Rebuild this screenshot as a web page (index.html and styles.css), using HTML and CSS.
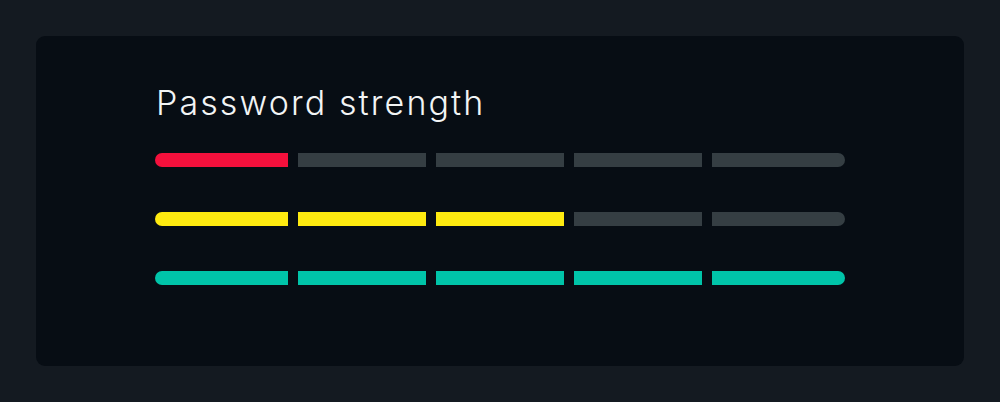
FILE: index.html
```html
<!DOCTYPE html>
<html lang="en">
<head>
    <meta charset="UTF-8">
    <meta name="viewport" content="width=device-width, initial-scale=1.0">
    <title>Password strength</title>
    <link rel="stylesheet" href="styles.css">
</head>
<body>
    <div class="panel">
        <h1 class="panel-title">Password strength</h1>

        <div class="meter weak">
            <span class="seg on"></span>
            <span class="seg"></span>
            <span class="seg"></span>
            <span class="seg"></span>
            <span class="seg"></span>
        </div>
        <div class="meter medium">
            <span class="seg on"></span>
            <span class="seg on"></span>
            <span class="seg on"></span>
            <span class="seg"></span>
            <span class="seg"></span>
        </div>
        <div class="meter strong">
            <span class="seg on"></span>
            <span class="seg on"></span>
            <span class="seg on"></span>
            <span class="seg on"></span>
            <span class="seg on"></span>
        </div>
    </div>
</body>
</html>
```

FILE: styles.css
```css
html, body {
    height: 100%;
}
body {
    margin: 0;
    padding: 36px;
    box-sizing: border-box;
    background: #141a21;
    font-family: Inter, "Open Sans", sans-serif;
}
.panel {
    height: 330px;
    box-sizing: border-box;
    background: #070d14;
    border-radius: 9px;
    padding: 46px 0 0 119px;
    display: flex;
    flex-direction: column;
    gap: 45px;
}
.panel-title {
    margin: 0 0 -16px 1px;
    font-size: 34px;
    font-weight: 300;
    line-height: 42px;
    color: #f2f4f5;
    letter-spacing: 2.1px;
}
.meter {
    display: grid;
    grid-template-columns: 133px 128px 128px 128px 133px;
    gap: 10px;
    height: 14px;
}
.seg {
    background: #353e43;
}
.seg:first-child {
    border-radius: 7px 0 0 7px;
}
.seg:last-child {
    border-radius: 0 7px 7px 0;
}
.weak .on { background: #f4103c; }
.medium .on { background: #feea10; }
.strong .on { background: #00c4a9; }
```
